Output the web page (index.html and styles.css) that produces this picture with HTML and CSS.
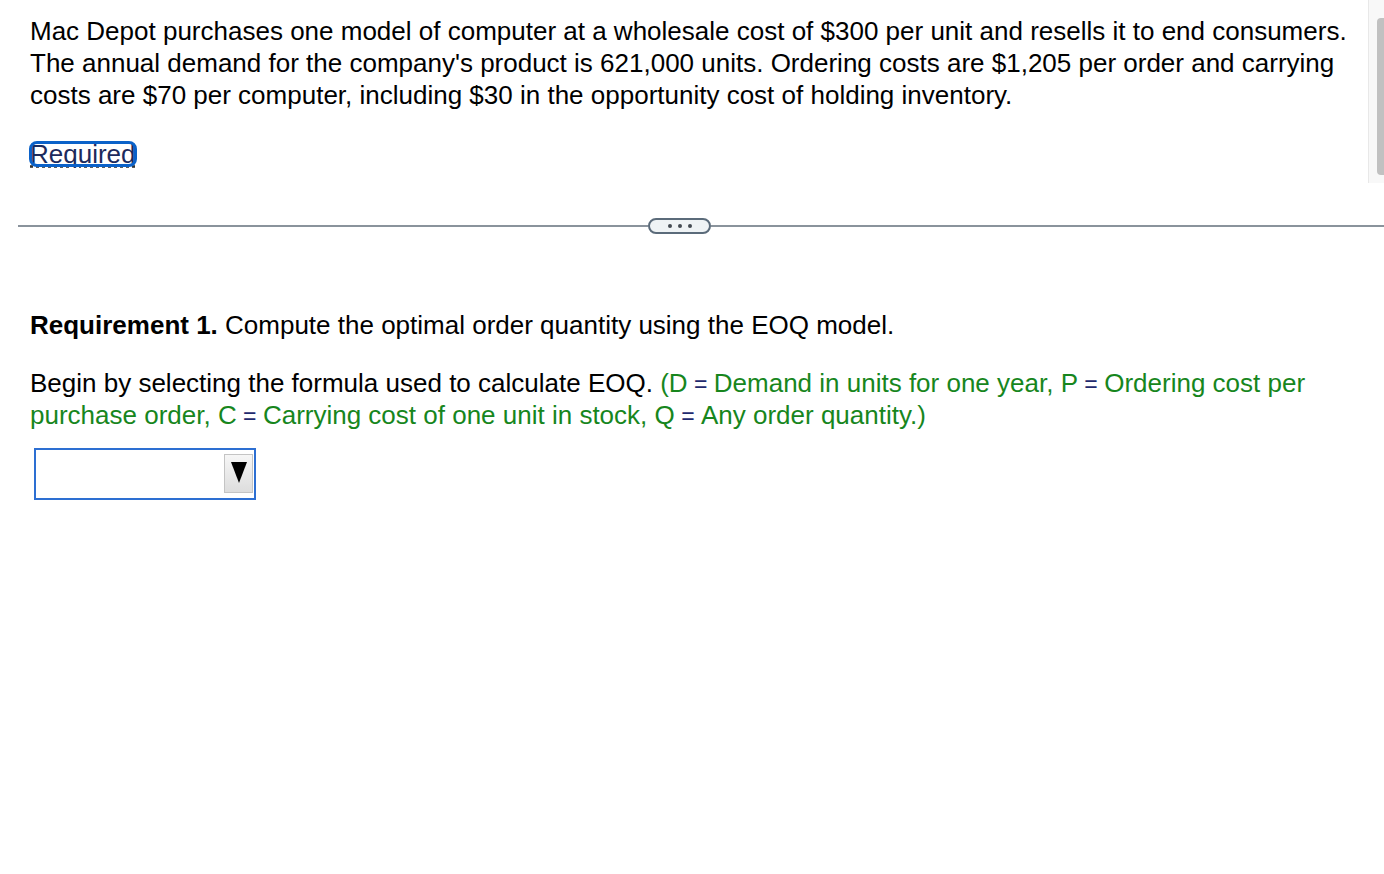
FILE: index.html
```html
<!DOCTYPE html>
<html>
<head>
<meta charset="utf-8">
<link rel="stylesheet" href="styles.css">
</head>
<body>
<div class="top">
  <div class="top-content">
    <p class="intro">Mac Depot purchases one model of computer at a wholesale cost of $300 per unit and resells it to end consumers. The annual demand for the company's product is 621,000 units. Ordering costs are $1,205 per order and carrying costs are $70 per computer, including $30 in the opportunity cost of holding inventory.</p>
    <div class="req-row"><a class="req-link" href="#">Required</a></div>
  </div>
  <div class="scrollbar"><div class="thumb"></div></div>
</div>
<div class="divider">
  <div class="line line-left"></div>
  <div class="pill"><span class="dot"></span><span class="dot"></span><span class="dot"></span></div>
  <div class="line line-right"></div>
</div>
<div class="main">
  <p class="req-title"><b>Requirement 1.</b> Compute the optimal order quantity using the EOQ model.</p>
  <p class="begin">Begin by selecting the formula used to calculate EOQ. <span class="green">(D<span class="eq"> = </span>Demand in units for one year, P<span class="eq"> = </span>Ordering cost per purchase order, C<span class="eq"> = </span>Carrying cost of one unit in stock, Q<span class="eq"> = </span>Any order quantity.)</span></p>
  <div class="select">
    <div class="select-btn"><span class="tri"></span></div>
  </div>
</div>
</body>
</html>
```
FILE: styles.css
```css
html, body {
  margin: 0;
  padding: 0;
  background: #ffffff;
}
body {
  font-family: "Liberation Sans", Arial, Helvetica, sans-serif;
  font-size: 26px;
  line-height: 32px;
  color: #000000;
}
p {
  margin: 0;
}
.top {
  display: flex;
  height: 183px;
}
.top-content {
  width: 1326px;
  padding: 15px 0 0 30px;
}
.intro {
  margin-bottom: 27px;
}
.req-row {
  height: 32px;
}
.req-link {
  display: inline-block;
  color: #1c2a5c;
  text-decoration: underline;
  text-decoration-style: dotted;
  text-decoration-color: #333;
  line-height: 24px;
  margin-top: 3px;
  outline: 3px solid #0b62c9;
  outline-offset: -2px;
  border-radius: 7px;
}
.scrollbar {
  margin-left: auto;
  width: 15px;
  border-left: 1px solid #e8e8e8;
  background: #f8f8f8;
  height: 183px;
}
.thumb {
  margin: 18px 0 0 8px;
  width: 8px;
  height: 157px;
  background: #c1c1c1;
  border-radius: 4px 0 0 4px;
}
.divider {
  display: flex;
  align-items: center;
  margin-top: 35px;
  padding-left: 18px;
  height: 16px;
}
.line {
  height: 2px;
  background: #8a939c;
}
.line-left {
  width: 630px;
}
.line-right {
  flex: 1;
}
.pill {
  box-sizing: border-box;
  width: 63px;
  height: 16px;
  border: 2px solid #5b6b7a;
  border-radius: 8px;
  background: #eff3f5;
  display: flex;
  align-items: center;
  justify-content: center;
  gap: 6px;
}
.dot {
  width: 4px;
  height: 4px;
  border-radius: 50%;
  background: #444b52;
}
.main {
  padding: 75px 0 0 30px;
  width: 1326px;
}
.req-title {
  margin-bottom: 26px;
}
.green {
  color: #17861d;
}
.eq {
  color: #1f2a6e;
  font-size: 23px;
  line-height: 1;
}
.select {
  box-sizing: border-box;
  margin: 17px 0 0 4px;
  width: 222px;
  height: 52px;
  border: 2px solid #2d6fd2;
  display: flex;
  justify-content: flex-end;
  align-items: flex-start;
  padding: 4px 1px 0 0;
}
.select-btn {
  box-sizing: border-box;
  width: 29px;
  height: 39px;
  border: 1px solid #c4c4c4;
  background: linear-gradient(#f6f6f6, #dddddd);
  display: flex;
  justify-content: center;
  padding-top: 7px;
}
.tri {
  width: 0;
  height: 0;
  border-left: 8px solid transparent;
  border-right: 8px solid transparent;
  border-top: 21px solid #000000;
}
```
